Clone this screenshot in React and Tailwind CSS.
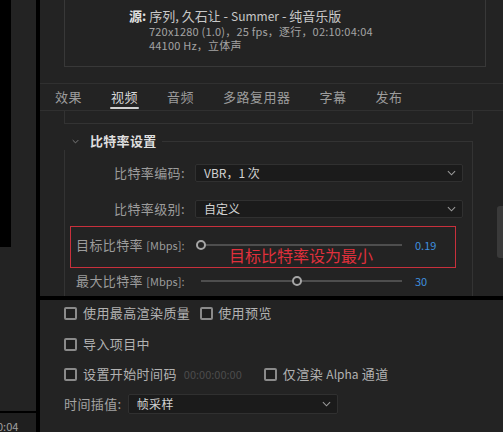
import React from 'react';

const FONT = { fontFamily: '"Noto Sans CJK SC", "Noto Sans", sans-serif' };

function Chevron({ className = '' }) {
  return (
    <svg viewBox="0 0 10 6" className={className} fill="none" stroke="currentColor" strokeWidth="1.2">
      <polyline points="1,1 5,5 9,1" />
    </svg>
  );
}

function Dropdown({ value, className = '' }) {
  return (
    <div className={`flex items-center justify-between bg-[#1b1b1b] border border-[#303030] rounded-[2px] pl-[8px] pr-[6px] ${className}`}>
      <span className="text-[12px] text-[#d2d2d2] leading-none">{value}</span>
      <Chevron className="w-[9px] h-[6px] text-[#9a9a9a]" />
    </div>
  );
}

function Checkbox() {
  return <div className="w-[13px] h-[13px] border-2 border-[#8a8a8a] rounded-[2px] bg-[#1e1e1e] shrink-0" />;
}

function Slider({ knob, trackLeft }) {
  return (
    <div className="relative w-[206px] h-[12px]">
      <div className={`absolute right-0 top-[5px] h-[2px] bg-[#4e4e4e] ${trackLeft}`} />
      <div className={`absolute top-[1px] w-[10px] h-[10px] rounded-full border-2 border-[#a6a6a6] bg-[#232323] ${knob}`} />
    </div>
  );
}

export default function App() {
  return (
    <div className="w-[503px] h-[432px] flex bg-black overflow-hidden" style={FONT}>
      {/* left strip */}
      <div className="w-[36px] flex flex-col">
        <div className="h-[247px] flex">
          <div className="w-[11px] bg-black" />
          <div className="flex-1 bg-[#232323]" />
        </div>
        <div className="h-[164px] bg-[#232323]" />
        <div className="h-[2px] bg-black" />
        <div className="flex-1 bg-[#1f1f1f] overflow-hidden pt-[8px]">
          <span className="block -ml-[3px] text-[11px] leading-none text-[#a0a0a0]">0:04</span>
        </div>
      </div>
      <div className="w-[4px] bg-black" />

      {/* main */}
      <div className="flex-1 flex flex-col">
        <div className="h-[296px] bg-[#232323] relative">
          {/* source box */}
          <div className="ml-[24px] w-[422px] h-[67px] border-l border-r border-b border-[#383838] pl-[64px] pt-[8px]">
            <div className="text-[13px] leading-[16px] text-[#c8c8c8] whitespace-nowrap">
              <span className="font-bold text-[#e0e0e0]">源:</span> 序列, 久石让 - <span className="text-[12px]">Summer</span> - 纯音乐版
            </div>
            <div className="pl-[20px] text-[11px] leading-[14px] text-[#a4a4a4] whitespace-nowrap tracking-[0.2px]">
              720x1280 (1.0)，25 fps，逐行，02:10:04:04
            </div>
            <div className="pl-[20px] text-[11px] leading-[14px] text-[#a4a4a4] whitespace-nowrap tracking-[0.2px]">
              44100 Hz，立体声
            </div>
          </div>

          {/* tabs */}
          <div className="mt-[16px] h-[28px] border-y border-[#303030] flex items-stretch pl-[15px] gap-[29px] text-[13px] text-[#9c9c9c] tracking-[0.5px]">
            {['效果', '视频', '音频', '多路复用器', '字幕', '发布'].map((t) => (
              <div key={t} className="relative flex items-center">
                <span className={t === '视频' ? 'text-[#d8d8d8]' : ''}>{t}</span>
                {t === '视频' && <div className="absolute left-[-1px] right-[-1px] bottom-[1px] h-[2px] bg-[#d0d0d0] rounded-full" />}
              </div>
            ))}
          </div>

          {/* previous group tail */}
          <div className="ml-[24px] w-[409px] h-[13px] border-l border-r border-b border-[#333333]" />

          {/* bitrate section */}
          <div className="ml-[24px] w-[409px] mt-[17px] border-l border-r border-t border-[#333333] h-[155px]">
            <div className="-mt-[10px] -ml-px flex items-center h-[18px] bg-[#232323] w-[98px]">
              <Chevron className="w-[7px] h-[5px] ml-[8px] text-[#8c8c8c]" />
              <span className="ml-[11px] text-[13px] font-bold text-[#dedede] tracking-[0.3px]">比特率设置</span>
            </div>

            <div className="flex items-center mt-[14px] h-[18px]">
              <span className="w-[120px] text-right text-[13px] text-[#9c9c9c] tracking-[0.4px]">比特率编码:</span>
              <Dropdown value="VBR，1 次" className="ml-[10px] w-[268px] h-[18px]" />
            </div>
            <div className="flex items-center mt-[18px] h-[18px]">
              <span className="w-[120px] text-right text-[13px] text-[#9c9c9c] tracking-[0.4px]">比特率级别:</span>
              <Dropdown value="自定义" className="ml-[10px] w-[268px] h-[18px]" />
            </div>
            <div className="flex items-center mt-[17px] h-[20px]">
              <span className="w-[131px] pl-[11px] text-[13px] text-[#9c9c9c] whitespace-nowrap tracking-[0.4px]">
                目标比特率 <span className="text-[11px] tracking-normal">[Mbps]:</span>
              </span>
              <Slider knob="left-0" trackLeft="left-[5px]" />
              <span className="ml-[13px] text-[11px] text-[#3f8fdf]">0.19</span>
            </div>
            <div className="flex items-center mt-[16px] h-[20px]">
              <span className="w-[131px] pl-[11px] text-[13px] text-[#9c9c9c] whitespace-nowrap tracking-[0.4px]">
                最大比特率 <span className="text-[11px] tracking-normal">[Mbps]:</span>
              </span>
              <Slider knob="left-[96px]" trackLeft="left-[5px]" />
              <span className="ml-[13px] text-[11px] text-[#3f8fdf]">30</span>
            </div>
          </div>

          {/* annotation */}
          <div className="absolute left-[30px] top-[226px] w-[386px] h-[42px] border border-[#c8303c]">
            <span className="absolute left-[158px] top-[20px] text-[16px] leading-[16px] text-[#e0303c] whitespace-nowrap">目标比特率设为最小</span>
          </div>

          {/* scrollbar */}
          <div className="absolute right-0 top-[206px] w-[6px] h-[52px] bg-[#3a3a3a] rounded-l-[3px]" />
        </div>

        <div className="h-[4px] bg-black" />

        {/* lower panel */}
        <div className="flex-1 bg-[#232323] pl-[24px] pt-[5px] text-[13px] text-[#b2b2b2] tracking-[0.4px]">
          <div className="flex items-center h-[16px]">
            <Checkbox />
            <span className="ml-[6px]">使用最高渲染质量</span>
            <div className="ml-[10px]"><Checkbox /></div>
            <span className="ml-[5px]">使用预览</span>
          </div>
          <div className="flex items-center h-[16px] mt-[15px]">
            <Checkbox />
            <span className="ml-[6px]">导入项目中</span>
          </div>
          <div className="flex items-center h-[16px] mt-[14px]">
            <Checkbox />
            <span className="ml-[6px]">设置开始时间码</span>
            <span className="ml-[7px] text-[11px] text-[#4c4c4c] tracking-normal">00:00:00:00</span>
            <div className="ml-[22px]"><Checkbox /></div>
            <span className="ml-[6px]">仅渲染 <span className="text-[12px] tracking-normal">Alpha</span> 通道</span>
          </div>
          <div className="flex items-center h-[20px] mt-[12px]">
            <span className="text-[#a4a4a4]">时间插值:</span>
            <Dropdown value="帧采样" className="ml-[6px] w-[210px] h-[20px]" />
          </div>
        </div>
      </div>
    </div>
  );
}
